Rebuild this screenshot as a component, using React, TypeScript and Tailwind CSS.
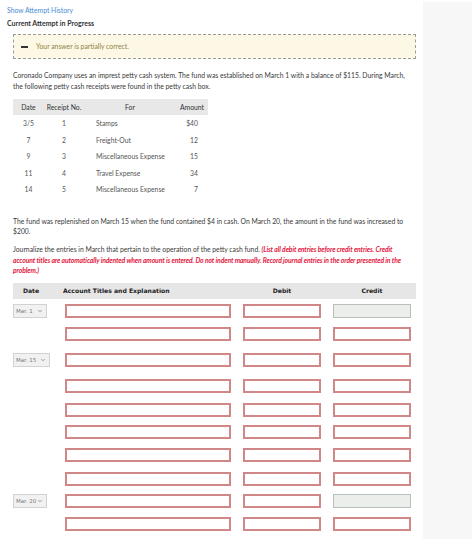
import { ChevronDown } from 'lucide-react';

const receipts = [
  { date: '3/5', no: '1', item: 'Stamps', amount: '$40' },
  { date: '7', no: '2', item: 'Freight-Out', amount: '12' },
  { date: '9', no: '3', item: 'Miscellaneous Expense', amount: '15' },
  { date: '11', no: '4', item: 'Travel Expense', amount: '34' },
  { date: '14', no: '5', item: 'Miscellaneous Expense', amount: '7' },
];

// each journal line: top margin, optional date select, whether credit is locked
const lines: { mt: string; date?: string; selectW?: string; lockCredit?: boolean }[] = [
  { mt: 'mt-[5px]', date: 'Mar. 1', selectW: 'w-[34px]', lockCredit: true },
  { mt: 'mt-[9px]' },
  { mt: 'mt-[12px]', date: 'Mar. 15', selectW: 'w-[37px]' },
  { mt: 'mt-[12px]' },
  { mt: 'mt-[10px]' },
  { mt: 'mt-[8px]' },
  { mt: 'mt-[9px]' },
  { mt: 'mt-[10px]' },
  { mt: 'mt-[8px]', date: 'Mar. 20', selectW: 'w-[34px]', lockCredit: true },
  { mt: 'mt-[9px]' },
];

function DateSelect({ label, width }: { label: string; width: string }) {
  return (
    <div
      className={`${width} h-[14px] flex items-center justify-between pl-[2px] pr-[3px] border border-[#d2d2d2] bg-[#f1f1f1] text-[5.5px] text-[#7a7a7a]`}
      style={{ fontFamily: '"DejaVu Sans", Verdana, sans-serif' }}
    >
      <span>{label}</span>
      <ChevronDown className="w-[6px] h-[6px] text-[#666]" strokeWidth={2.5} />
    </div>
  );
}

function Field({ width, locked }: { width: string; locked?: boolean }) {
  return locked ? (
    <div className={`${width} h-[14px] border border-[#b8c0ba] bg-[#eceeec]`} />
  ) : (
    <div className={`${width} h-[14px] border-2 border-[#cf8787] bg-white`} />
  );
}

export default function App() {
  return (
    <div
      className="flex min-h-[539px] w-[474px] bg-white text-[6.8px] leading-[10.5px] text-[#3a3a3a]"
      style={{ fontFamily: 'Lato, "Open Sans", sans-serif' }}
    >
      <main className="w-[423px] pb-[8px]">
        <div className="pt-[5px] pl-[7px] text-[#4a8bd4]">Show Attempt History</div>
        <div className="mt-[2px] pl-[7px] text-[7px] font-bold text-[#333]">Current Attempt in Progress</div>

        {/* feedback banner */}
        <div className="mt-[6px] ml-[13px] w-[403px] h-[25px] flex items-center pl-[7px] border border-dashed border-[#9c9c9c] bg-[#fdf8e6]">
          <div className="w-[7px] h-[2px] bg-[#333]" />
          <span className="ml-[8px] text-[#8f803f]">Your answer is partially correct.</span>
        </div>

        <div className="pl-[13px] pr-[9px]">
          <p className="mt-[11px] pr-[3px]">
            Coronado Company uses an imprest petty cash system. The fund was established on March 1 with a balance of $115. During March,
            the following petty cash receipts were found in the petty cash box.
          </p>

          {/* receipts table */}
          <div className="mt-[8px] w-[195px]">
            <div className="flex h-[16px] items-center bg-[#e8e8e8] text-[#333]">
              <span className="w-[27px] text-center pl-[4px]">Date</span>
              <span className="w-[48px] text-center">Receipt No.</span>
              <span className="w-[84px] text-center">For</span>
              <span className="flex-1 text-right pr-[4px]">Amount</span>
            </div>
            {receipts.map((r) => (
              <div key={r.no} className="flex h-[16.5px] items-center text-[#555]">
                <span className="w-[27px] text-center pl-[4px]">{r.date}</span>
                <span className="w-[48px] text-center">{r.no}</span>
                <span className="w-[84px] pl-[8px]">{r.item}</span>
                <span className="flex-1 text-right pr-[10px]">{r.amount}</span>
              </div>
            ))}
          </div>

          <p className="mt-[18px]">
            The fund was replenished on March 15 when the fund contained $4 in cash. On March 20, the amount in the fund was increased to
            $200.
          </p>

          <p className="mt-[7.5px]">
            Journalize the entries in March that pertain to the operation of the petty cash fund.{' '}
            <em className="font-bold tracking-[-0.12px] text-[#e3173e]">
              (List all debit entries before credit entries. Credit account titles are automatically indented when amount is entered. Do
              not indent manually. Record journal entries in the order presented in the problem.)
            </em>
          </p>
        </div>

        {/* journal entry grid */}
        <div className="ml-[13px] mt-[7.5px] w-[403px]">
          <div
            className="flex h-[16px] items-center bg-[#e6e6e6] text-[6.1px] font-bold text-[#222]"
            style={{ fontFamily: '"DejaVu Sans", Verdana, sans-serif' }}
          >
            <span className="w-[36px] text-center">Date</span>
            <span className="ml-[14px] w-[180px]">Account Titles and Explanation</span>
            <span className="w-[78px] text-center">Debit</span>
            <span className="ml-[12px] w-[78px] text-center">Credit</span>
          </div>

          {lines.map((l, i) => (
            <div key={i} className={`${l.mt} flex items-center`}>
              <div className="w-[52px]">{l.date && <DateSelect label={l.date} width={l.selectW!} />}</div>
              <Field width="w-[166px]" />
              <div className="ml-[12px]">
                <Field width="w-[78px]" />
              </div>
              <div className="ml-[12px]">
                <Field width="w-[78px]" locked={l.lockCredit} />
              </div>
            </div>
          ))}
        </div>
      </main>
      <aside className="mt-[2px] w-[49px] bg-[#f7f7f7]" />
    </div>
  );
}
